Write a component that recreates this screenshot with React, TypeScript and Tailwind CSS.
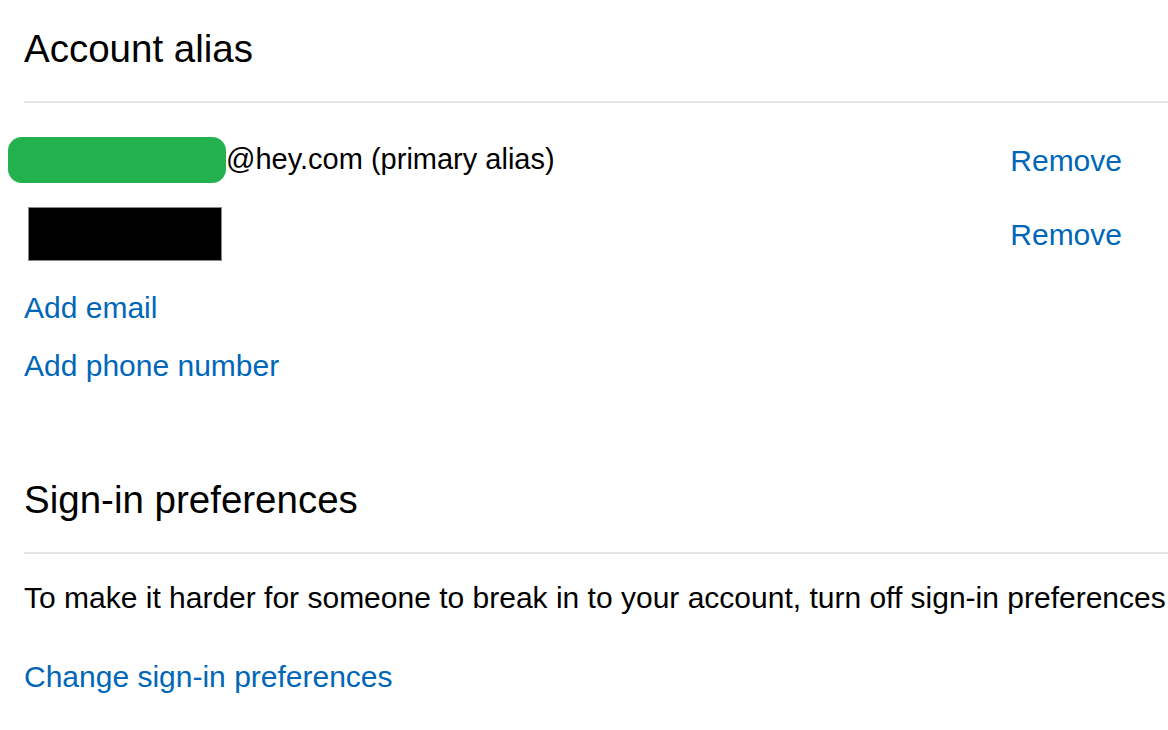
export default function App() {
  const link = "text-[#0067b8] hover:underline cursor-pointer";
  return (
    <div
      className="w-[1168px] h-[730px] overflow-hidden bg-white text-black"
      style={{ fontFamily: '"Liberation Sans", Arial, sans-serif' }}
    >
      <section className="pl-6">
        <h2 className="mt-[26px] text-[38.5px] leading-[46px] font-normal">Account alias</h2>
        <div className="mt-[29px] h-[2px] bg-[#e6e6e6]" />

        <div className="mt-5 text-[30px]">
          <div className="flex h-[74px] items-center justify-between pr-[46px]">
            <div className="flex items-center">
              <span className="-ml-4 inline-block h-[46px] w-[218px] rounded-[14px] bg-[#22b14c]" />
              <span className="text-[29px]">@hey.com (primary alias)</span>
            </div>
            <a className={link}>Remove</a>
          </div>
          <div className="flex h-[74px] items-center justify-between pr-[46px]">
            <span className="ml-1 inline-block h-[54px] w-[194px] border border-[#8a8a8a] bg-black" />
            <a className={link}>Remove</a>
          </div>
          <div className="mt-2 flex flex-col items-start">
            <a className={`${link} leading-[58px]`}>Add email</a>
            <a className={`${link} leading-[58px]`}>Add phone number</a>
          </div>
        </div>
      </section>

      <section className="pl-6">
        <h2 className="mt-[82px] text-[38.5px] leading-[46px] font-normal">Sign-in preferences</h2>
        <div className="mt-[29px] h-[2px] bg-[#e6e6e6]" />
        <p className="mt-6 whitespace-nowrap text-[30px] leading-[40px]">
          To make it harder for someone to break in to your account, turn off sign-in preferences you don't use.
        </p>
        <a className={`${link} mt-[39px] block text-[30px] leading-[40px]`}>Change sign-in preferences</a>
      </section>
    </div>
  );
}
